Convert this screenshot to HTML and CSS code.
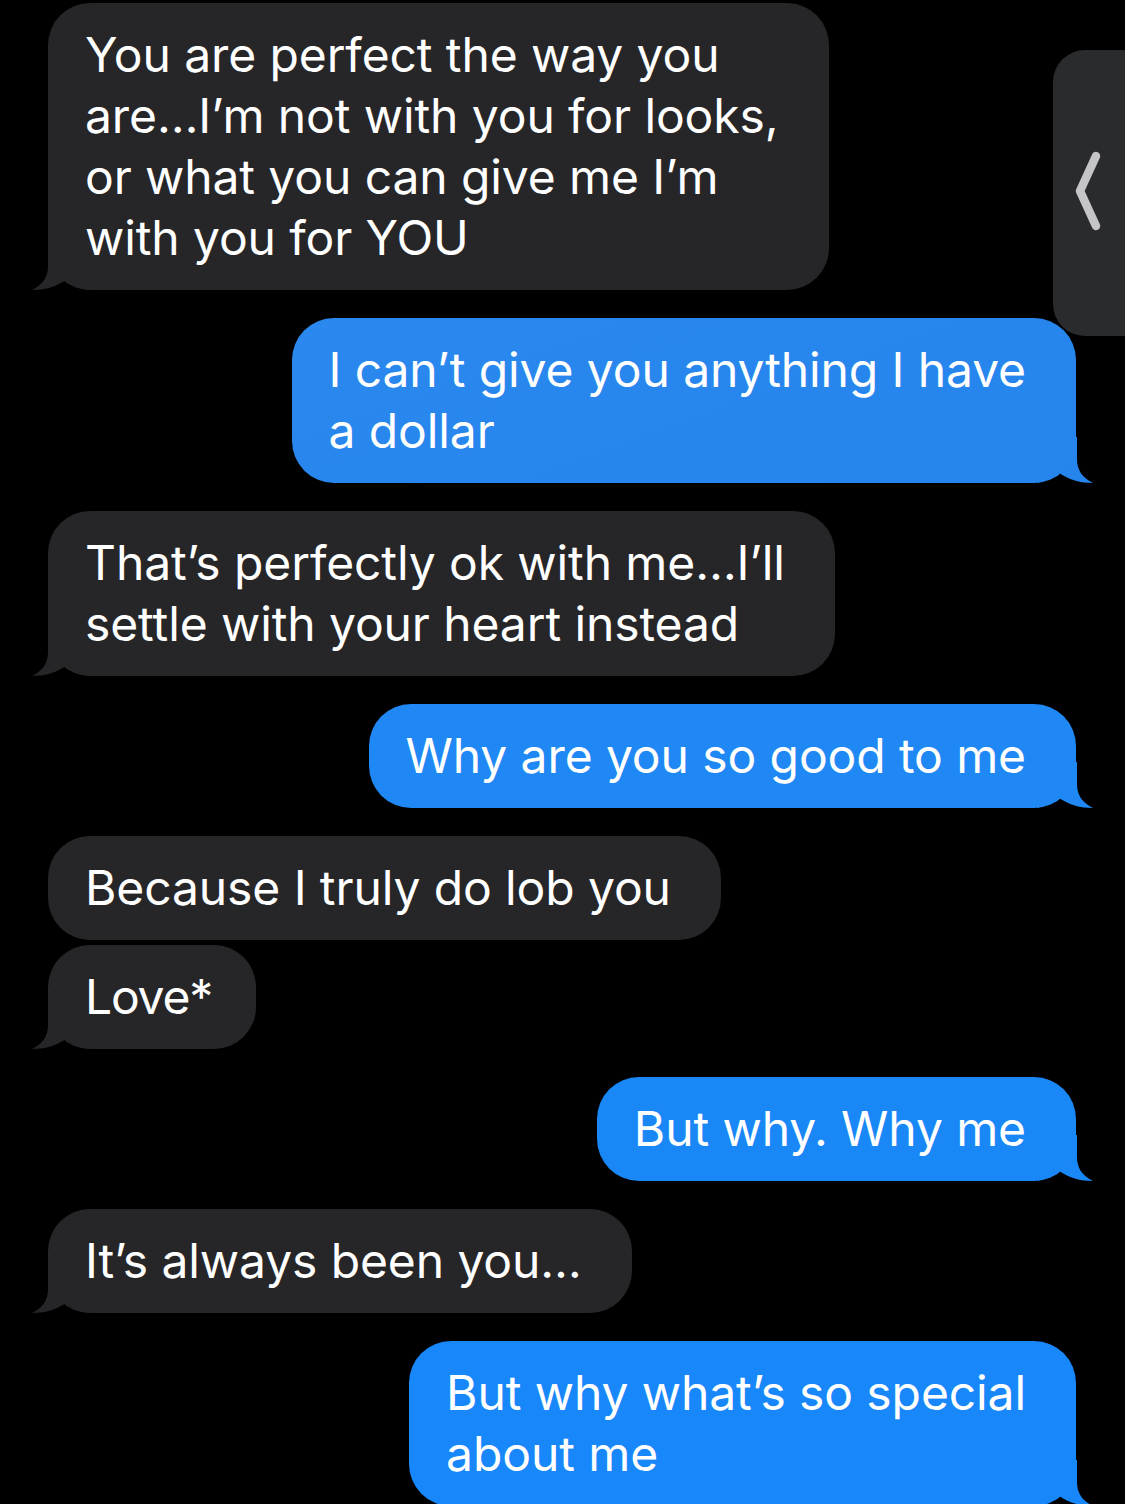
FILE: index.html
```html
<!DOCTYPE html>
<html>
<head>
<meta charset="utf-8">
<link rel="stylesheet" href="styles.css">
</head>
<body>
<div class="thread">
  <div class="msg in tail">
    <div class="bubble">You are perfect the way you<br>are…I’m not with you for looks,<br>or what you can give me I’m<br>with you for YOU</div>
    <svg class="tail-svg" viewBox="0 0 56 46" width="56" height="46"><path d="M16 0 L16 22 C16 34 10 41 0 46 C12 46 25 43 35 35 C41 40 47 44 56 46 L56 0 Z"/></svg>
  </div>
  <div class="msg out tail b1">
    <div class="bubble">I can’t give you anything I have<br>a dollar</div>
    <svg class="tail-svg" viewBox="0 0 56 46" width="56" height="46"><path d="M16 0 L16 22 C16 34 10 41 0 46 C12 46 25 43 35 35 C41 40 47 44 56 46 L56 0 Z"/></svg>
  </div>
  <div class="msg in tail">
    <div class="bubble">That’s perfectly ok with me…I’ll<br>settle with your heart instead</div>
    <svg class="tail-svg" viewBox="0 0 56 46" width="56" height="46"><path d="M16 0 L16 22 C16 34 10 41 0 46 C12 46 25 43 35 35 C41 40 47 44 56 46 L56 0 Z"/></svg>
  </div>
  <div class="msg out tail b2">
    <div class="bubble">Why are you so good to me</div>
    <svg class="tail-svg" viewBox="0 0 56 46" width="56" height="46"><path d="M16 0 L16 22 C16 34 10 41 0 46 C12 46 25 43 35 35 C41 40 47 44 56 46 L56 0 Z"/></svg>
  </div>
  <div class="msg in">
    <div class="bubble">Because I truly do lob you</div>
  </div>
  <div class="msg in tail grouped">
    <div class="bubble love">Love*</div>
    <svg class="tail-svg" viewBox="0 0 56 46" width="56" height="46"><path d="M16 0 L16 22 C16 34 10 41 0 46 C12 46 25 43 35 35 C41 40 47 44 56 46 L56 0 Z"/></svg>
  </div>
  <div class="msg out tail b3">
    <div class="bubble">But why. Why me</div>
    <svg class="tail-svg" viewBox="0 0 56 46" width="56" height="46"><path d="M16 0 L16 22 C16 34 10 41 0 46 C12 46 25 43 35 35 C41 40 47 44 56 46 L56 0 Z"/></svg>
  </div>
  <div class="msg in tail">
    <div class="bubble">It’s always been you…</div>
    <svg class="tail-svg" viewBox="0 0 56 46" width="56" height="46"><path d="M16 0 L16 22 C16 34 10 41 0 46 C12 46 25 43 35 35 C41 40 47 44 56 46 L56 0 Z"/></svg>
  </div>
  <div class="msg out tail b4">
    <div class="bubble">But why what’s so special<br>about me</div>
    <svg class="tail-svg" viewBox="0 0 56 46" width="56" height="46"><path d="M16 0 L16 22 C16 34 10 41 0 46 C12 46 25 43 35 35 C41 40 47 44 56 46 L56 0 Z"/></svg>
  </div>
</div>
<div class="handle">
  <svg width="40" height="90" viewBox="0 0 40 90"><path d="M26 8 L10 43 L26 78" fill="none" stroke="#c5c5c9" stroke-width="8.5" stroke-linecap="round" stroke-linejoin="round"/></svg>
</div>
</body>
</html>
```
FILE: styles.css
```css
html, body {
  margin: 0;
  padding: 0;
  background: #000;
  width: 1125px;
  height: 1504px;
  overflow: hidden;
}
body {
  position: relative;
  font-family: Inter, "Noto Sans", sans-serif;
  -webkit-font-smoothing: antialiased;
}
.thread {
  display: flex;
  flex-direction: column;
  gap: 28px;
  padding: 3px 49px 0 48px;
}
.msg {
  position: relative;
  display: flex;
}
.msg.in { justify-content: flex-start; }
.msg.out { justify-content: flex-end; }
.msg.grouped { margin-top: -23px; }
.bubble {
  position: relative;
  z-index: 1;
  white-space: nowrap;
  font-size: 48px;
  line-height: 61px;
  letter-spacing: -0.1px;
  color: #fff;
  padding: 21px 50px 22px 37px;
  border-radius: 42px;
}
.bubble.love { letter-spacing: -1.2px; padding-right: 44px; }
.msg.in .bubble { background: #262628; }
.msg.out .bubble { background: #2288f2; }
.msg.b1 .bubble { background: linear-gradient(160deg, #2a88ee, #2585ed); }
.msg.b2 .bubble { background: #1f88f4; }
.msg.b3 .bubble { background: #1a87f7; }
.msg.b4 .bubble { background: #1887fa; }
.tail-svg {
  position: absolute;
  bottom: 0;
  z-index: 0;
}
.msg.in .tail-svg { left: -16px; fill: #262628; }
.msg.out .tail-svg { right: -17px; transform: scaleX(-1); }
.msg.b1 .tail-svg { fill: #2585ed; }
.msg.b2 .tail-svg { fill: #1f88f4; }
.msg.b3 .tail-svg { fill: #1a87f7; }
.msg.b4 .tail-svg { fill: #1887fa; }
.handle {
  position: absolute;
  top: 50px;
  right: 0;
  width: 72px;
  height: 286px;
  background: #2a2b2d;
  border-radius: 32px 0 0 32px;
  display: flex;
  align-items: center;
  justify-content: flex-start;
  padding-left: 17px;
  box-sizing: border-box;
}
```
